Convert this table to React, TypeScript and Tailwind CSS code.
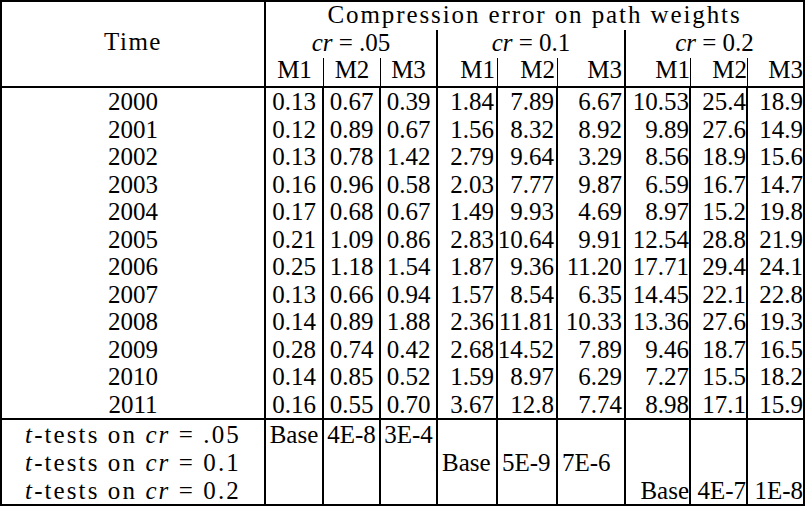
const rows = [
  ["2000", "0.13", "0.67", "0.39", "1.84", "7.89", "6.67", "10.53", "25.4", "18.9"],
  ["2001", "0.12", "0.89", "0.67", "1.56", "8.32", "8.92", "9.89", "27.6", "14.9"],
  ["2002", "0.13", "0.78", "1.42", "2.79", "9.64", "3.29", "8.56", "18.9", "15.6"],
  ["2003", "0.16", "0.96", "0.58", "2.03", "7.77", "9.87", "6.59", "16.7", "14.7"],
  ["2004", "0.17", "0.68", "0.67", "1.49", "9.93", "4.69", "8.97", "15.2", "19.8"],
  ["2005", "0.21", "1.09", "0.86", "2.83", "10.64", "9.91", "12.54", "28.8", "21.9"],
  ["2006", "0.25", "1.18", "1.54", "1.87", "9.36", "11.20", "17.71", "29.4", "24.1"],
  ["2007", "0.13", "0.66", "0.94", "1.57", "8.54", "6.35", "14.45", "22.1", "22.8"],
  ["2008", "0.14", "0.89", "1.88", "2.36", "11.81", "10.33", "13.36", "27.6", "19.3"],
  ["2009", "0.28", "0.74", "0.42", "2.68", "14.52", "7.89", "9.46", "18.7", "16.5"],
  ["2010", "0.14", "0.85", "0.52", "1.59", "8.97", "6.29", "7.27", "15.5", "18.2"],
  ["2011", "0.16", "0.55", "0.70", "3.67", "12.8", "7.74", "8.98", "17.1", "15.9"],
];

const tests = [
  { label: ".05", cells: ["Base", "4E-8", "3E-4", "", "", "", "", "", ""] },
  { label: "0.1", cells: ["", "", "", "Base", "5E-9", "7E-6", "", "", ""] },
  { label: "0.2", cells: ["", "", "", "", "", "", "Base", "4E-7", "1E-8"] },
];

// column i (0..8): first group centred, the other two right aligned
const align = (i: number) =>
  i < 3 ? "justify-center" : i < 6 ? "justify-end pr-[2px]" : "justify-end";
const testAlign = (i: number) =>
  i < 3 ? "justify-center" : i < 6 ? "justify-start pl-[4px]" : "justify-end";

function Cr({ v }: { v: string }) {
  return (
    <span className="whitespace-pre">
      <i>cr</i> = {v}
    </span>
  );
}

export default function App() {
  return (
    <div className="bg-white w-[807px] h-[509px] font-['Liberation_Serif',serif] text-black text-[25px] leading-none">
      <div className="w-[805px] border-2 border-black grid grid-cols-[264px_58px_57px_57px_60px_60px_68px_65px_57px_55px] grid-rows-[28px_28px_30px_repeat(11,27.5px)_29.5px_28px_28px_28px]">
        {/* header */}
        <div className="row-span-3 border-r-2 border-b-2 border-black flex items-center justify-center pb-[6px] tracking-[1.5px]">
          Time
        </div>
        <div className="col-span-9 flex items-center justify-center pb-[4px] tracking-[1.9px]">
          Compression error on path weights
        </div>
        <div className="col-span-3 border-r-2 border-black flex items-center justify-center pb-[4px]">
          <Cr v=".05" />
        </div>
        <div className="col-span-3 border-r-2 border-black flex items-center justify-center pb-[4px]">
          <Cr v="0.1" />
        </div>
        <div className="col-span-3 flex items-center justify-center pb-[4px]">
          <Cr v="0.2" />
        </div>
        {["M1", "M2", "M3", "M1", "M2", "M3", "M1", "M2", "M3"].map((m, i) => (
          <div
            key={i}
            className={`border-b-2 border-black flex items-center pb-[6px] ${align(i)} ${
              i === 8 ? "" : i === 2 || i === 5 ? "border-r-2" : "border-r-[1.5px]"
            }`}
          >
            {m}
          </div>
        ))}

        {/* data */}
        {rows.map((r, ri) => {
          const last = ri === rows.length - 1 ? "border-b-2" : "";
          return [
            <div key={`${ri}-t`} className={`border-r-2 border-black flex items-center justify-center ${last}`}>
              {r[0]}
            </div>,
            ...r.slice(1).map((v, i) => (
              <div
                key={`${ri}-${i}`}
                className={`border-black flex items-center ${align(i)} ${last} ${i === 8 ? "" : "border-r-2"}`}
              >
                {v}
              </div>
            )),
          ];
        })}

        {/* t-tests */}
        {tests.map((t, ti) => [
          <div key={`t${ti}`} className="border-r-2 border-black flex items-center justify-center">
            <span className="whitespace-pre tracking-[2.1px]">
              <i>t</i>-tests on <Cr v={t.label} />
            </span>
          </div>,
          ...t.cells.map((v, i) => (
            <div
              key={`t${ti}-${i}`}
              className={`border-black flex items-center ${testAlign(i)} ${i === 8 ? "" : "border-r-2"}`}
            >
              {v}
            </div>
          )),
        ])}
      </div>
    </div>
  );
}
